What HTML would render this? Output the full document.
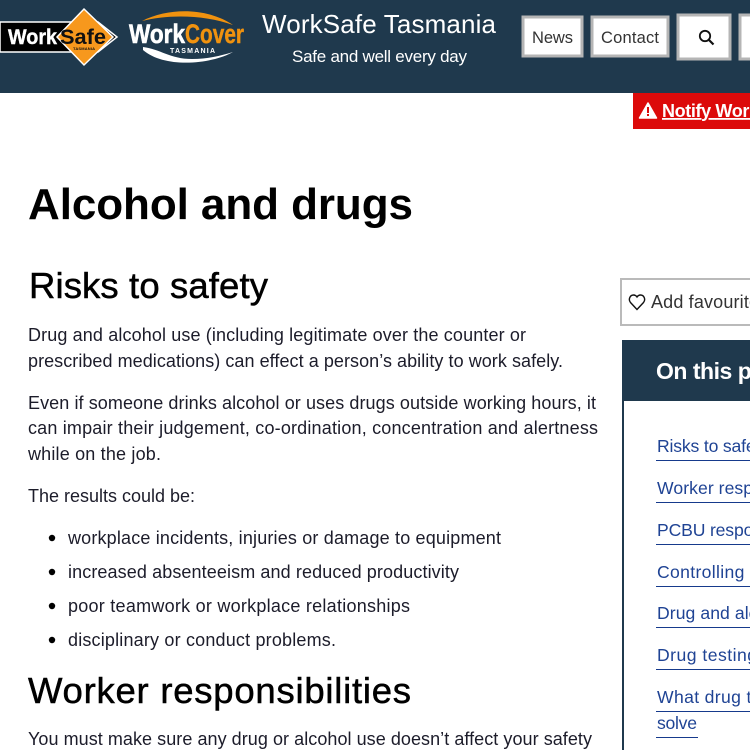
<!DOCTYPE html>
<html lang="en"><head><meta charset="utf-8"><title>Alcohol and drugs</title>
<style>
html,body{margin:0;padding:0;width:750px;height:750px;overflow:hidden;background:#fff}
svg{display:block;position:absolute;left:0;top:0}
text{font-family:"Liberation Sans",Arial,sans-serif}
.b{font-size:18px;fill:#1c1c2a}
.h{font-size:36.5px;fill:#000;stroke:#000;stroke-width:.5}
.l{font-size:17.6px;fill:#1f4394}
.n{font-size:16.5px;fill:#333}
</style></head><body>
<svg width="750" height="750" viewBox="0 0 750 750">
<rect width="750" height="93" fill="#1f394d"/>
<!-- WorkSafe logo -->
<path d="M0 22H98L117 37 98 52H0Z" fill="#000" stroke="#fff" stroke-width="1.5"/>
<path d="M84 9L113 37 84 65 57 37Z" fill="#f7981d" stroke="#fff" stroke-width="1.5"/>
<text x="8" y="44" font-size="21" font-weight="700" fill="#fff" stroke="#fff" stroke-width=".4" textLength="49" lengthAdjust="spacingAndGlyphs">Work</text>
<text x="60" y="44" font-size="21" font-weight="700" fill="#111" textLength="46" lengthAdjust="spacingAndGlyphs">Safe</text>
<text x="73" y="50" font-size="4" font-weight="700" fill="#111" textLength="22">TASMANIA</text>
<!-- WorkCover logo -->
<path d="M142 21C170 7 208 8 233 25 205 15 170 14 142 21Z" fill="#f0920f"/>
<text x="129" y="43" font-size="27" font-weight="700" fill="#fff" stroke="#fff" stroke-width=".6" textLength="56" lengthAdjust="spacingAndGlyphs">Work</text>
<text x="185" y="43" font-size="27" font-weight="700" fill="#f0920f" stroke="#f0920f" stroke-width=".4" textLength="59" lengthAdjust="spacingAndGlyphs">Cover</text>
<text x="170" y="53" font-size="7" font-weight="700" fill="#fff" textLength="45">TASMANIA</text>
<path d="M143 47C160 49 170 59 192 59 207 59 220 56 233 52 212 64 165 69 143 50Z" fill="#fff"/>
<!-- Title -->
<text x="262" y="33" font-size="26" fill="#fff" textLength="234">WorkSafe Tasmania</text>
<text x="292" y="62" font-size="17" fill="#fff" textLength="175">Safe and well every day</text>
<!-- Nav buttons -->
<rect x="523" y="17" width="59" height="39" fill="#fff" stroke="#b5b5b5" stroke-width="3"/>
<text class="n" x="532" y="43" textLength="41">News</text>
<rect x="592" y="17" width="76" height="39" fill="#fff" stroke="#b5b5b5" stroke-width="3"/>
<text class="n" x="601" y="43" textLength="58">Contact</text>
<rect x="678" y="15" width="52" height="44" fill="#fff" stroke="#b5b5b5" stroke-width="3"/>
<circle cx="705" cy="36" r="5.2" fill="none" stroke="#111" stroke-width="1.8"/>
<path d="M709 40L713.500 44.500" stroke="#111" stroke-width="2.2"/>
<rect x="740" y="15" width="30" height="44" fill="#fff" stroke="#b5b5b5" stroke-width="3"/>
<!-- Alert -->
<rect x="633" y="93" width="117" height="36" fill="#dc0a0a"/>
<path d="M648 103L656.500 118H639.500Z" fill="#fff" stroke="#fff" stroke-width="1.500" stroke-linejoin="round"/>
<rect x="647" y="107" width="2" height="6" fill="#dc0a0a"/><rect x="647" y="114" width="2" height="2" fill="#dc0a0a"/>
<text x="662" y="117" font-size="18" font-weight="700" fill="#fff" text-decoration="underline" textLength="97">Notify Work</text>
<!-- Main -->
<text x="28" y="219" font-size="44" font-weight="700" fill="#000" textLength="385">Alcohol and drugs</text>
<text class="h" x="29" y="298" textLength="239">Risks to safety</text>
<text class="b" x="28" y="341" textLength="498">Drug and alcohol use (including legitimate over the counter or</text>
<text class="b" x="28" y="367" textLength="535">prescribed medications) can effect a person’s ability to work safely.</text>
<text class="b" x="28" y="409" textLength="568">Even if someone drinks alcohol or uses drugs outside working hours, it</text>
<text class="b" x="28" y="434" textLength="570">can impair their judgement, co-ordination, concentration and alertness</text>
<text class="b" x="28" y="460" textLength="133">while on the job.</text>
<text class="b" x="28" y="502" textLength="167">The results could be:</text>
<circle cx="52" cy="538" r="3.2" fill="#000"/>
<text class="b" x="68" y="544" textLength="433">workplace incidents, injuries or damage to equipment</text>
<circle cx="52" cy="572" r="3.2" fill="#000"/>
<text class="b" x="68" y="578" textLength="391">increased absenteeism and reduced productivity</text>
<circle cx="52" cy="606" r="3.2" fill="#000"/>
<text class="b" x="68" y="612" textLength="342">poor teamwork or workplace relationships</text>
<circle cx="52" cy="640" r="3.2" fill="#000"/>
<text class="b" x="68" y="646" textLength="268">disciplinary or conduct problems.</text>
<text class="h" x="28" y="703" textLength="383">Worker responsibilities</text>
<text class="b" x="28" y="745" textLength="564">You must make sure any drug or alcohol use doesn’t affect your safety</text>
<!-- Sidebar -->
<rect x="621" y="279" width="140" height="46" fill="#fff" stroke="#bababa" stroke-width="2"/>
<path d="M637 309.500L630.500 302.500C628 299.500 630 295 633.500 295 635 295 636.200 295.800 637 297 637.800 295.800 639 295 640.500 295 644 295 646 299.500 643.500 302.500Z" fill="none" stroke="#111" stroke-width="1.400"/>
<text x="651" y="308" font-size="18" fill="#333" textLength="108">Add favourite</text>
<rect x="622" y="340" width="140" height="61" fill="#1f394d"/>
<rect x="622" y="340" width="2" height="410" fill="#1f394d"/>
<text x="656" y="379" font-size="23" font-weight="700" fill="#fff" textLength="134">On this page</text>
<g stroke="#163a8c" stroke-width="1">
<path d="M656 460.500H750M656 502.500H750M656 544.500H750M656 586.500H750M656 627.500H750M656 669.500H750M656 711.500H750M656 737.500H698"/>
</g>
<text class="l" x="657" y="452" textLength="112">Risks to safety</text>
<text class="l" x="657" y="494" textLength="178">Worker responsibilities</text>
<text class="l" x="657" y="536" textLength="166">PCBU responsibilities</text>
<text class="l" x="657" y="578" textLength="118">Controlling the</text>
<text class="l" x="657" y="619" textLength="134">Drug and alcohol</text>
<text class="l" x="657" y="661" textLength="100">Drug testing</text>
<text class="l" x="657" y="703" textLength="128">What drug tests</text>
<text class="l" x="657" y="729" textLength="40">solve</text>
</svg>
</body></html>
